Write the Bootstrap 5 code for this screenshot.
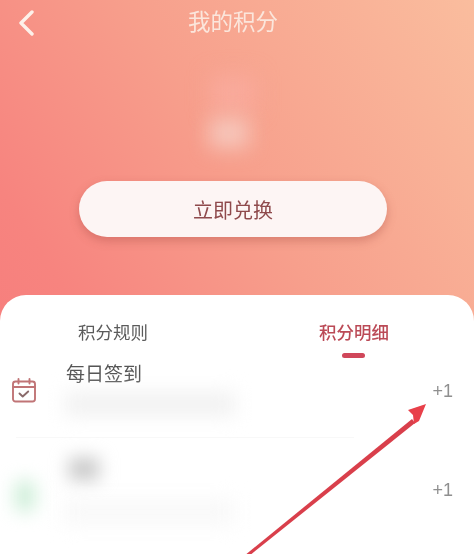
<!doctype html>
<html lang="zh">
<head>
<meta charset="utf-8">
<title>我的积分</title>
<link rel="stylesheet" href="https://cdn.jsdelivr.net/npm/bootstrap@5.3.0/dist/css/bootstrap.min.css">
<style>
html,body{height:100%;overflow:hidden}
body{font-family:"Liberation Sans","Noto Sans CJK SC",sans-serif;background:#fff}
.screen{width:474px;height:554px;overflow:hidden;position:relative;background:linear-gradient(58deg,#f6777a 0%,#f7847f 28%,#f79f8c 58%,#fabd9e 100%);filter:blur(.6px)}
.topbar{height:46px;padding-left:18px}
.backbtn{width:18px;height:26px;display:block}
.pagetitle{font-size:22.500px;line-height:28px;color:#fbe6dc;margin-left:-2px;padding-right:42px}
.pointsbox{height:135px;width:80px;margin-left:193px;padding-top:30px}
.blurtop{width:44px;height:36px;margin-left:18px;background:#f9aa9c;filter:blur(11px)}
.blurnum{width:40px;height:30px;margin-left:16px;margin-top:6px;background:#f6c6bb;filter:blur(10px)}
.redeem{width:308px;height:56px;margin-left:79px;padding-top:10px;background:#fdf5f4;border:0;border-radius:28px;color:#8f4a4c;font-size:20px;line-height:1;box-shadow:0 4px 10px rgba(160,70,60,.35)}
.sheet{margin-top:58px;height:259px;background:#fff;border-radius:26px 26px 0 0}
.tabrow{height:57px;padding-top:27px}
.tabitem{font-size:17.500px;line-height:22px;color:#5b5b5b;width:70px;white-space:nowrap}
.tabitem.first{margin-left:78px}
.tabitem.active{margin-left:171px;color:#bb4a56;font-weight:500}
.tabmark{width:23px;height:5px;border-radius:3px;background:#d0475a;margin:9px 0 0 23px}
.entry{height:85px;padding:0 21px 0 12px}
.entryicon{width:24px;height:25px;margin-top:26px;flex:none}
.entrybody{width:200px;margin-left:24px}
.entryname{font-size:19px;line-height:24px;color:#555;margin-top:11px;margin-left:6px;white-space:nowrap}
.blurline{width:170px;height:22px;margin:6px 0 0 5px;background:#f0f0f0;filter:blur(10px)}
.delta{font-size:18px;line-height:24px;color:#8f8f8f;margin-top:27px;margin-left:auto}
.rule{height:1px;background:#f8f8f8;margin:0 120px 0 16px}
.entry.second{height:110px}
.greendot{width:20px;height:30px;margin-top:43px;margin-left:3px;background:#cdeed8;filter:blur(9px);flex:none}
.blurname{width:30px;height:22px;margin:20px 0 0 10px;background:#c6c6c6;filter:blur(9px)}
.blurline.pale{background:#f8f8f8;margin-top:20px;height:24px}
.second .delta{margin-top:40px}
.pointer{position:absolute;left:0;top:0;width:474px;height:554px;pointer-events:none}
</style>
</head>
<body>
<div class="screen">
  <div class="topbar d-flex align-items-center">
    <svg class="backbtn" viewBox="0 0 18 26" fill="none" stroke="#fdf1ea" stroke-width="3.4" stroke-linecap="round" stroke-linejoin="round"><path d="M14 2 3 13l11 11"/></svg>
    <div class="pagetitle flex-grow-1 text-center">我的积分</div>
  </div>
  <div class="pointsbox">
    <div class="blurtop"></div>
    <div class="blurnum"></div>
  </div>
  <button class="btn redeem d-block" type="button">立即兑换</button>
  <div class="sheet">
    <div class="tabrow d-flex">
      <div class="tabitem first">积分规则</div>
      <div class="tabitem active">积分明细<div class="tabmark"></div></div>
    </div>
    <div class="entry d-flex">
      <svg class="entryicon" viewBox="0 0 24 25" fill="none" stroke="#c07476" stroke-width="1.900" stroke-linecap="round" stroke-linejoin="round"><rect x="1" y="3.500" width="22" height="20" rx="2.500"/><path d="M1 9h22M6.500 1v4.500M17.500 1v4.500"/><path d="M7.500 15.500l3.200 3 5.500-5" stroke="#8a6a6a"/></svg>
      <div class="entrybody">
        <div class="entryname">每日签到</div>
        <div class="blurline"></div>
      </div>
      <div class="delta">+1</div>
    </div>
    <div class="rule"></div>
    <div class="entry second d-flex">
      <div class="greendot"></div>
      <div class="entrybody">
        <div class="blurname"></div>
        <div class="blurline pale"></div>
      </div>
      <div class="delta">+1</div>
    </div>
  </div>
  <svg class="pointer" viewBox="0 0 474 554"><path d="M244 556 412 419 415 423 249 556Z" fill="#d93f4b"/><path d="M426 404 408 410 413 415 414 424 419 421Z" fill="#e8404a"/></svg>
</div>
</body>
</html>
